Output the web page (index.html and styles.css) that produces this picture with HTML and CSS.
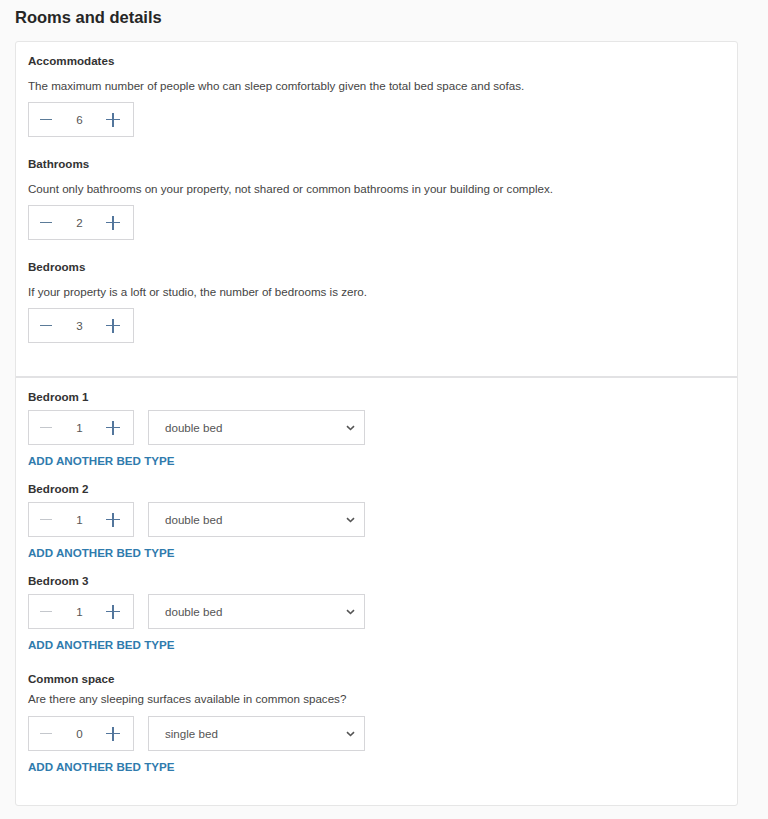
FILE: index.html
```html
<!DOCTYPE html>
<html>
  <head>
    <meta charset="UTF-8">
    <title>Rooms and details</title>
    <link rel="stylesheet" href="styles.css">
  </head>
  <body>
    <h1>Rooms and details</h1>

    <div class="card">
      <div class="section counts">
        <div class="field">
          <div class="label">Accommodates</div>
          <p class="desc">The maximum number of people who can sleep comfortably given the total bed space and sofas.</p>
          <div class="stepper">
            <span class="minus"></span><span class="value">6</span><span class="plus"></span>
          </div>
        </div>
        <div class="field">
          <div class="label">Bathrooms</div>
          <p class="desc">Count only bathrooms on your property, not shared or common bathrooms in your building or complex.</p>
          <div class="stepper">
            <span class="minus"></span><span class="value">2</span><span class="plus"></span>
          </div>
        </div>
        <div class="field">
          <div class="label">Bedrooms</div>
          <p class="desc">If your property is a loft or studio, the number of bedrooms is zero.</p>
          <div class="stepper">
            <span class="minus"></span><span class="value">3</span><span class="plus"></span>
          </div>
        </div>
      </div>

      <div class="section beds">
        <div class="room">
          <div class="label">Bedroom 1</div>
          <div class="row">
            <div class="stepper">
              <span class="minus off"></span><span class="value">1</span><span class="plus"></span>
            </div>
            <div class="select"><span>double bed</span><svg width="9" height="6" viewBox="0 0 9 6"><path d="M1 1.2l3.5 3.3L8 1.2" fill="none" stroke="#555" stroke-width="1.6"/></svg></div>
          </div>
          <a class="add" href="#">Add another bed type</a>
        </div>
        <div class="room">
          <div class="label">Bedroom 2</div>
          <div class="row">
            <div class="stepper">
              <span class="minus off"></span><span class="value">1</span><span class="plus"></span>
            </div>
            <div class="select"><span>double bed</span><svg width="9" height="6" viewBox="0 0 9 6"><path d="M1 1.2l3.5 3.3L8 1.2" fill="none" stroke="#555" stroke-width="1.6"/></svg></div>
          </div>
          <a class="add" href="#">Add another bed type</a>
        </div>
        <div class="room">
          <div class="label">Bedroom 3</div>
          <div class="row">
            <div class="stepper">
              <span class="minus off"></span><span class="value">1</span><span class="plus"></span>
            </div>
            <div class="select"><span>double bed</span><svg width="9" height="6" viewBox="0 0 9 6"><path d="M1 1.2l3.5 3.3L8 1.2" fill="none" stroke="#555" stroke-width="1.6"/></svg></div>
          </div>
          <a class="add" href="#">Add another bed type</a>
        </div>
        <div class="room common">
          <div class="label">Common space</div>
          <p class="desc">Are there any sleeping surfaces available in common spaces?</p>
          <div class="row">
            <div class="stepper">
              <span class="minus off"></span><span class="value">0</span><span class="plus"></span>
            </div>
            <div class="select"><span>single bed</span><svg width="9" height="6" viewBox="0 0 9 6"><path d="M1 1.2l3.5 3.3L8 1.2" fill="none" stroke="#555" stroke-width="1.6"/></svg></div>
          </div>
          <a class="add" href="#">Add another bed type</a>
        </div>
      </div>
    </div>
  </body>
</html>
```

FILE: styles.css
```css
body {
  margin: 0;
  padding: 8px 0 14px 15px;
  background: #fafafa;
  font-family: "Liberation Sans", Arial, sans-serif;
  font-size: 11.6px;
  color: #333;
}

h1 {
  margin: 0;
  font-size: 16.5px;
  line-height: 19px;
  font-weight: bold;
  color: #262626;
}

.card {
  width: 721px;
  margin-top: 14px;
  background: #fff;
  border: 1px solid #e6e6e6;
  border-radius: 3px;
}

.section {
  padding: 11px 12px 0;
}

.counts {
  display: flex;
  flex-direction: column;
  gap: 19px;
  padding-bottom: 33px;
}

.beds {
  border-top: 2px solid #e2e2e4;
  padding-top: 11px;
  padding-bottom: 30px;
  display: flex;
  flex-direction: column;
  gap: 12px;
}

.label {
  font-weight: bold;
  line-height: 16px;
  color: #333;
}

.desc {
  margin: 9px 0 8px;
  line-height: 16px;
  color: #444;
}

.stepper {
  box-sizing: border-box;
  width: 106px;
  height: 35px;
  padding-right: 3px;
  border: 1px solid #d6d6d9;
  background: #fff;
  display: flex;
  align-items: center;
}

.stepper > span {
  flex: 1;
  height: 100%;
  display: flex;
  align-items: center;
  justify-content: center;
}

.value {
  color: #555;
}

.minus::before {
  content: "";
  width: 12px;
  height: 1.6px;
  background: #5b7b98;
}

.minus.off::before {
  background: #c4c7cc;
}

.plus {
  position: relative;
}

.plus::before,
.plus::after {
  content: "";
  position: absolute;
  background: #53769c;
}

.plus::before {
  width: 14px;
  height: 1.7px;
}

.plus::after {
  width: 1.7px;
  height: 14px;
}

.row {
  display: flex;
  gap: 14px;
  margin-top: 5px;
}

.select {
  box-sizing: border-box;
  width: 217px;
  height: 35px;
  border: 1px solid #d6d6d9;
  padding: 0 9px 0 16px;
  display: flex;
  align-items: center;
  justify-content: space-between;
  color: #555;
}

.add {
  display: block;
  margin-top: 8px;
  line-height: 16px;
  font-weight: bold;
  text-transform: uppercase;
  text-decoration: none;
  color: #2f7bad;
}

.common {
  margin-top: 6px;
}

.common .desc {
  margin: 4px 0 9px;
}

.common .row {
  margin-top: 0;
}
```
